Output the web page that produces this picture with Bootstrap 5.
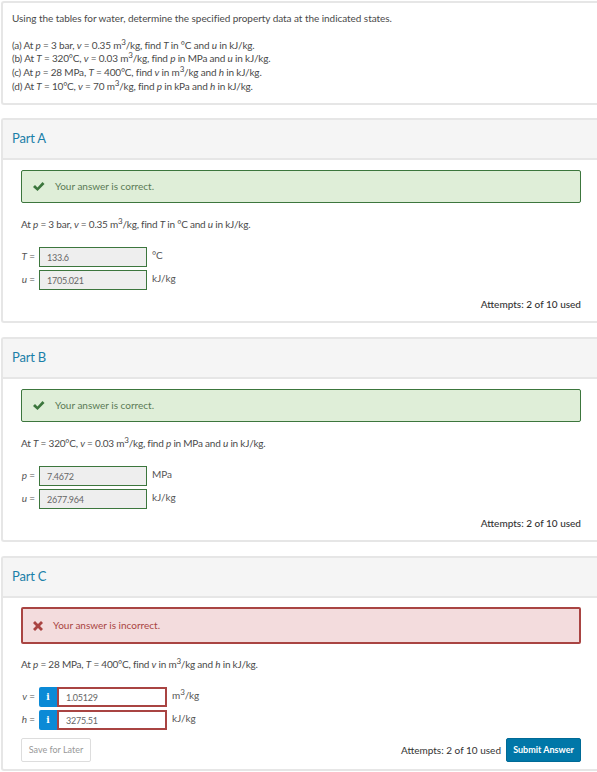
<!DOCTYPE html>
<html lang="en">
<head>
<meta charset="UTF-8">
<meta name="viewport" content="width=device-width, initial-scale=1.0">
<title>Water property data</title>
<link href="https://cdn.jsdelivr.net/npm/bootstrap@5.3.0/dist/css/bootstrap.min.css" rel="stylesheet">
<style>
body { font-family: Lato, "Liberation Sans", sans-serif; font-size: 10px; color: #4a4a4a; background: #fff; margin: 0; letter-spacing: -0.1px; }
sup { font-size: 8px; top: -4px; line-height: 0; }
.q-page { padding: 1px 0 0 1px; }
.q-card { border: 2px solid #e6e6e6; border-right: 0; border-radius: 3px 0 0 3px; margin-bottom: 14px; background: #fff; }
.q-card:last-child { margin-bottom: 0; }
.q-intro { height: 104px; margin-bottom: 13px; padding: 9px 10px 0 9px; line-height: 13.7px; }
.q-intro p { margin: 0 0 13px; letter-spacing: -0.05px; }
.q-intro div { letter-spacing: -0.18px; }
.q-head { height: 40px; background: #f5f5f5; border-bottom: 2px solid #e6e6e6; padding: 0 9px; font-size: 13px; line-height: 36px; color: #1a7fa8; letter-spacing: -0.2px; }
.q-body { padding: 10px 16px 0 18px; position: relative; }
.q-part { height: 205px; }
.q-part-last { height: 215px; }
.q-alert { height: 33px; border-radius: 2px; display: flex; align-items: center; padding-left: 10px; gap: 10px; letter-spacing: 0; }
.q-ok { background: #dfeed8; border: 1px solid #3c763d; color: #5a7a55; }
.q-bad { background: #f3dcdd; border: 2px solid #a94442; color: #a94442; height: 37px; margin-top: -1px; margin-bottom: -1px; }
.q-prompt { margin: 15px 0 17px; line-height: 12px; letter-spacing: -0.21px; }
.q-row { display: flex; align-items: center; height: 20px; margin-bottom: 3px; }
.q-lab { width: 14px; text-align: right; margin-right: 4px; margin-bottom: 2px; color: #555; white-space: nowrap; }
.q-box { width: 108px; height: 20px; border: 1px solid #3c763d; background: #eee; padding-left: 7px; line-height: 20px; color: #666; font-size: 9px; letter-spacing: -0.25px; }
.q-info { width: 18px; height: 20px; background: #0b8ad6; color: #fff; font: bold 9px "DejaVu Serif", serif; text-align: center; line-height: 20px; border-radius: 2px 0 0 2px; }
.q-box-bad { width: 110px; height: 20px; border: 2px solid #a94442; background: #fff; padding-left: 7px; line-height: 17px; color: #666; font-size: 9px; letter-spacing: -0.25px; }
.q-unit { margin-left: 5px; margin-bottom: 3px; color: #555; }
.q-attempts { position: absolute; right: 16px; top: 137px; color: #333; font-size: 10px; font-weight: 500; letter-spacing: 0; }
.q-foot { display: flex; justify-content: space-between; align-items: center; margin-top: 8px; }
.q-save { height: 24px; width: 70px; font-size: 9px; color: #999; background: #fff; border: 1px solid #ddd; border-radius: 2px; padding: 0; }
.q-submit { height: 24px; width: 75px; font-size: 9px; font-weight: 700; color: #fff; background: #0077a8; border: 1px solid #006a96; border-radius: 2px; padding: 0; }
.q-foot-r { display: flex; align-items: center; gap: 5px; color: #333; letter-spacing: 0; }
</style>
</head>
<body>
<div class="q-page">
  <div class="q-card q-intro">
    <p>Using the tables for water, determine the specified property data at the indicated states.</p>
    <div>(a) At <i>p</i> = 3 bar, <i>v</i> = 0.35 m<sup>3</sup>/kg, find <i>T</i> in °C and <i>u</i> in kJ/kg.</div>
    <div>(b) At <i>T</i> = 320°C, <i>v</i> = 0.03 m<sup>3</sup>/kg, find <i>p</i> in MPa and <i>u</i> in kJ/kg.</div>
    <div>(c) At <i>p</i> = 28 MPa, <i>T</i> = 400°C, find <i>v</i> in m<sup>3</sup>/kg and <i>h</i> in kJ/kg.</div>
    <div>(d) At <i>T</i> = 10°C, <i>v</i> = 70 m<sup>3</sup>/kg, find <i>p</i> in kPa and <i>h</i> in kJ/kg.</div>
  </div>

  <div class="q-card q-part">
    <div class="q-head">Part A</div>
    <div class="q-body">
      <div class="q-alert q-ok">
        <svg width="13" height="11" viewBox="0 0 13 11"><path d="M1 6l2-2 2.500 2.500L10.500 1l2 2-7 7z" fill="#3c763d"/></svg>
        <span>Your answer is correct.</span>
      </div>
      <p class="q-prompt">At <i>p</i> = 3 bar, <i>v</i> = 0.35 m<sup>3</sup>/kg, find <i>T</i> in °C and <i>u</i> in kJ/kg.</p>
      <div class="q-row"><span class="q-lab"><i>T</i> =</span><span class="q-box">133.6</span><span class="q-unit">°C</span></div>
      <div class="q-row"><span class="q-lab"><i>u</i> =</span><span class="q-box">1705.021</span><span class="q-unit">kJ/kg</span></div>
      <div class="q-attempts">Attempts: 2 of 10 used</div>
    </div>
  </div>

  <div class="q-card q-part">
    <div class="q-head">Part B</div>
    <div class="q-body">
      <div class="q-alert q-ok">
        <svg width="13" height="11" viewBox="0 0 13 11"><path d="M1 6l2-2 2.500 2.500L10.500 1l2 2-7 7z" fill="#3c763d"/></svg>
        <span>Your answer is correct.</span>
      </div>
      <p class="q-prompt">At <i>T</i> = 320°C, <i>v</i> = 0.03 m<sup>3</sup>/kg, find <i>p</i> in MPa and <i>u</i> in kJ/kg.</p>
      <div class="q-row"><span class="q-lab"><i>p</i> =</span><span class="q-box">7.4672</span><span class="q-unit">MPa</span></div>
      <div class="q-row"><span class="q-lab"><i>u</i> =</span><span class="q-box">2677.964</span><span class="q-unit">kJ/kg</span></div>
      <div class="q-attempts">Attempts: 2 of 10 used</div>
    </div>
  </div>

  <div class="q-card q-part-last">
    <div class="q-head">Part C</div>
    <div class="q-body">
      <div class="q-alert q-bad">
        <svg width="10" height="10" viewBox="0 0 10 10"><path d="M2 0l3 3 3-3 2 2-3 3 3 3-2 2-3-3-3 3-2-2 3-3-3-3z" fill="#a94442"/></svg>
        <span>Your answer is incorrect.</span>
      </div>
      <p class="q-prompt">At <i>p</i> = 28 MPa, <i>T</i> = 400°C, find <i>v</i> in m<sup>3</sup>/kg and <i>h</i> in kJ/kg.</p>
      <div class="q-row"><span class="q-lab"><i>v</i> =</span><span class="q-info">i</span><span class="q-box-bad">1.05129</span><span class="q-unit">m<sup>3</sup>/kg</span></div>
      <div class="q-row"><span class="q-lab"><i>h</i> =</span><span class="q-info">i</span><span class="q-box-bad">3275.51</span><span class="q-unit">kJ/kg</span></div>
      <div class="q-foot">
        <button type="button" class="btn q-save">Save for Later</button>
        <div class="q-foot-r"><span>Attempts: 2 of 10 used</span><button type="button" class="btn q-submit">Submit Answer</button></div>
      </div>
    </div>
  </div>
</div>
<script src="https://cdn.jsdelivr.net/npm/bootstrap@5.3.0/dist/js/bootstrap.bundle.min.js"></script>
</body>
</html>
